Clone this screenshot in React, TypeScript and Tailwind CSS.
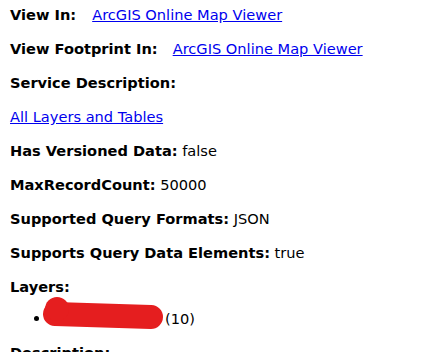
import React from "react";

export default function App() {
  const font = { fontFamily: '"DejaVu Sans", Verdana, sans-serif' };
  return (
    <div
      className="w-[426px] h-[352px] overflow-hidden bg-white text-black text-[14.6px] leading-[17px] pl-[10px] pt-[6px]"
      style={font}
    >
      <div className="flex flex-col gap-[17px]">
        <div>
          <b>View In:</b>
          <span className="inline-block w-[16px]" />
          <a href="#" className="text-[#0000ee] underline">ArcGIS Online Map Viewer</a>
        </div>
        <div>
          <b>View Footprint In:</b>
          <span className="inline-block w-[15px]" />
          <a href="#" className="text-[#0000ee] underline">ArcGIS Online Map Viewer</a>
        </div>
        <div>
          <b>Service Description:</b>
        </div>
        <div>
          <a href="#" className="text-[#0000ee] underline">All Layers and Tables</a>
        </div>
        <div>
          <b>Has Versioned Data:</b> false
        </div>
        <div>
          <b>MaxRecordCount:</b> 50000
        </div>
        <div>
          <b>Supported Query Formats:</b> JSON
        </div>
        <div>
          <b>Supports Query Data Elements:</b> true
        </div>
        <div className="flex flex-col">
          <div>
            <b>Layers:</b>
          </div>
          <div className="h-[15px]" />
          <div className="flex items-center pl-[24px]">
            <span className="w-[9px] flex items-center">
              <span className="inline-block w-[5px] h-[5px] rounded-full bg-black" />
            </span>
            <span className="relative inline-block w-[122px] h-[17px]">
              <svg className="absolute left-0 top-[-13px]" width="126" height="40" viewBox="0 0 126 40">
                <path d="M12 17 L108 20" stroke="#e51e1f" strokeWidth="24" strokeLinecap="round" fill="none" />
                <circle cx="14" cy="12" r="12" fill="#e51e1f" />
              </svg>
            </span>
            <span>(10)</span>
          </div>
        </div>
        <div>
          <b>Description:</b>
        </div>
      </div>
    </div>
  );
}
